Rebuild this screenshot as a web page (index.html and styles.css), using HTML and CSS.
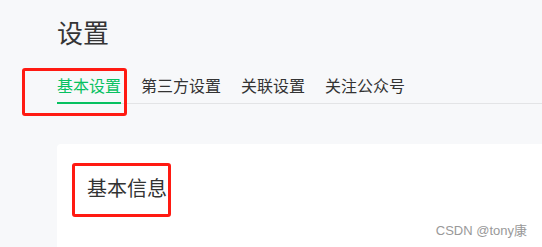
FILE: index.html
```html
<!DOCTYPE html>
<html lang="zh-CN">
<head>
<meta charset="utf-8">
<title>设置</title>
<link rel="stylesheet" href="styles.css">
</head>
<body>
<div class="page">
  <h1 class="title">设置</h1>
  <nav class="tabs">
    <a class="tab active">基本设置</a>
    <a class="tab">第三方设置</a>
    <a class="tab">关联设置</a>
    <a class="tab">关注公众号</a>
  </nav>
  <section class="card">
    <h2 class="card-title">基本信息</h2>
  </section>
  <div class="mark mark-tab"></div>
  <div class="mark mark-card"></div>
  <div class="watermark">CSDN @tony康</div>
</div>
</body>
</html>
```
FILE: styles.css
```css
html, body {
  margin: 0;
  padding: 0;
  background: #f7f8fa;
}
.page {
  position: relative;
  width: 542px;
  height: 247px;
  overflow: hidden;
  padding: 14px 0 0 57px;
  box-sizing: border-box;
  font-family: "Noto Sans CJK SC", "Noto Sans", sans-serif;
  color: #333;
}
.title {
  margin: 0;
  font-size: 26px;
  line-height: 36px;
  font-weight: 400;
  color: #353535;
}
.tabs {
  display: flex;
  gap: 20px;
  margin-top: 24px;
  border-bottom: 1px solid #e3e4e6;
}
.tab {
  font-size: 16px;
  line-height: 22px;
  padding-bottom: 6px;
  border-bottom: 2px solid transparent;
  margin-bottom: -1px;
  color: #333;
}
.tab.active {
  color: #07c160;
  border-bottom-color: #07c160;
}
.card {
  margin-top: 40px;
  background: #fff;
  border-radius: 4px 0 0 0;
  padding: 30px 30px 0 30px;
  height: 120px;
}
.card-title {
  margin: 0;
  font-size: 20px;
  line-height: 28px;
  font-weight: 400;
  color: #333;
}
.mark {
  position: absolute;
  border: 3px solid #ff1a12;
  border-radius: 3px;
  box-sizing: border-box;
}
.mark-tab {
  left: 22px;
  top: 68px;
  width: 105px;
  height: 48px;
}
.mark-card {
  left: 72px;
  top: 163px;
  width: 99px;
  height: 54px;
}
.watermark {
  position: absolute;
  right: 15px;
  bottom: 7px;
  font-size: 13px;
  line-height: 18px;
  color: #999;
  font-family: "Liberation Sans", "Noto Sans CJK SC", sans-serif;
}
```
